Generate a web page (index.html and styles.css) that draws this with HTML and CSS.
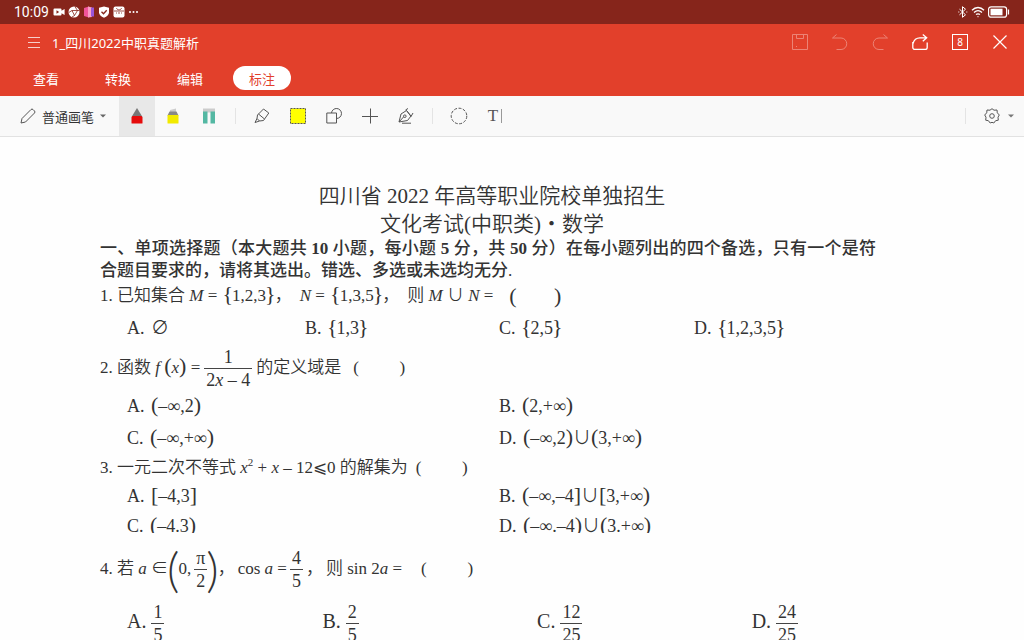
FILE: index.html
```html
<!DOCTYPE html>
<html lang="zh-CN">
<head>
<meta charset="utf-8">
<meta name="viewport" content="width=device-width, initial-scale=1">
<title>1_四川2022中职真题解析</title>
<link rel="stylesheet" href="styles.css">
</head>
<body>
<div class="status">
  <span class="clock">10:09</span>
  <svg width="12" height="12" viewBox="0 0 12 12"><path d="M1.500 2.500h6a1 1 0 0 1 1 1v1.200L11.600 3v6L8.500 7.300v1.200a1 1 0 0 1-1 1h-6a1 1 0 0 1-1-1v-5a1 1 0 0 1 1-1z" fill="#fff"/><path d="M3.500 4.200v3.600L6.200 6z" fill="#86251b"/></svg>
  <svg width="12" height="12" viewBox="0 0 12 12"><circle cx="6" cy="6" r="5.500" fill="#fff"/><path d="M.8 6.500L4 4.500h7M4 4.500l2.500 5L4 11M6.500 9.500L9.500 4.500 7 .8" fill="none" stroke="#86251b" stroke-width=".8"/></svg>
  <svg width="12" height="12" viewBox="0 0 12 12"><path d="M1 2l5-1.500v11L1 10z" fill="#f2559b"/><path d="M5 .6l4 .8v9.500l-4 .6z" fill="#fb9fc6"/><path d="M8 1.500h3v9H8z" fill="#9a55d8"/></svg>
  <svg width="12" height="12" viewBox="0 0 12 12"><path d="M6 .4l5 1.400v4.500c0 2.500-2 4.200-5 5.500C3 10.500 1 8.800 1 6.300V1.800z" fill="#fff"/><path d="M3.500 5.800l2 2 3.200-3.500" fill="none" stroke="#86251b" stroke-width="1.300"/></svg>
  <svg width="12" height="12" viewBox="0 0 12 12"><rect x=".5" y=".5" width="11" height="11" rx="2" fill="#fff"/><path d="M3.500 2c.5 2.500 4.500 2.500 5 0M1 5h10M3 7h1m1 0h2m1 0h1" fill="none" stroke="#86251b" stroke-width=".8"/></svg>
  <svg width="12" height="12" viewBox="0 0 12 12" fill="#fff"><circle cx="2" cy="6" r="1"/><circle cx="5.500" cy="6" r="1"/><circle cx="9" cy="6" r="1"/></svg>
  <span class="spacer"></span>
  <svg width="10" height="12" viewBox="0 0 10 12" fill="none" stroke="#fff"><path d="M1.500 3.200l6 5.600L4.500 11.300V.7l3 2.500-6 5.600M.3 6h1M8.300 6h1"/></svg>
  <svg width="14" height="12" viewBox="0 0 14 12" fill="none" stroke="#fff" stroke-width="1.300"><path d="M1 4.200c3.500-3.600 8.500-3.600 12 0M3 6.500c2.500-2.300 5.500-2.300 8 0M5 8.600c1.300-1 2.700-1 4 0"/><circle cx="7" cy="10.700" r=".6" fill="#fff" stroke="none"/></svg>
  <svg width="22" height="12" viewBox="0 0 22 12"><rect x=".6" y=".8" width="18" height="10.400" rx="2.500" fill="none" stroke="#fff" stroke-width="1.200"/><rect x="2.500" y="2.700" width="12" height="6.600" fill="#fff"/><path d="M20.500 3.500v5" stroke="#fff" stroke-width="1.200"/></svg>
</div>

<header class="header">
  <div class="title-row">
    <button class="menu" aria-label="菜单"><svg width="12" height="12" viewBox="0 0 12 12" stroke="#fff" opacity=".75"><path d="M0 1.500h12M0 6.500h12M0 11.500h12"/></svg></button>
    <h1 class="file">1_四川2022中职真题解析</h1>
    <span class="spacer"></span>
    <button class="act dim" aria-label="保存"><svg width="16" height="16" viewBox="0 0 16 16"><path d="M.5.500h15v15H.5zM4.500.500v4h7v-4M4 12.500h1"/></svg></button>
    <button class="act dim" aria-label="撤销"><svg width="16" height="16" viewBox="0 0 16 16"><path d="M4.500.500l-4 3.500H9a5.700 5.700 0 0 1 0 11.500H4.500"/></svg></button>
    <button class="act dim" aria-label="重做"><svg width="16" height="16" viewBox="0 0 16 16"><path d="M11.500.500l4 3.500H7a5.700 5.700 0 0 0 0 11.500h4.500"/></svg></button>
    <button class="act" aria-label="分享"><svg width="16" height="16" viewBox="0 0 16 16"><path d="M.8 8v5.500a2 2 0 0 0 2 2h10.400a2 2 0 0 0 2-2V8.500M1 9.500C2 5.500 5 3.800 8 3.800h6.500M10.800.500l3.900 3.300-3.900 3.400" stroke-width="1.300"/></svg></button>
    <button class="act"><span class="count">8</span></button>
    <button class="act" aria-label="关闭"><svg width="16" height="16" viewBox="0 0 16 16"><path d="M1.500 1.500l13 13M14.500 1.500l-13 13" stroke-width="1.200"/></svg></button>
  </div>
  <nav class="tabs">
    <button class="tab">查看</button>
    <button class="tab">转换</button>
    <button class="tab">编辑</button>
    <button class="tab active">标注</button>
  </nav>
</header>

<div class="toolbar">
  <button class="pen">
    <svg width="16" height="16" viewBox="0 0 16 16" class="line"><path d="M1 15l1-4.500L11 1.500q1-1 2 0l1.500 1.500q1 1 0 2L5.500 14z"/></svg>
    <span>普通画笔</span>
    <svg width="6" height="4" viewBox="0 0 6 4"><path d="M0 .5h6L3 3.500z" fill="#666"/></svg>
  </button>
  <button class="tool on" aria-label="红色画笔"><svg width="14" height="16" viewBox="0 0 14 16"><path d="M7 0L1.500 9h11z" fill="#777"/><path d="M2.500 8h9l1 1.500V15a.5.500 0 0 1-.5.500H2a.5.500 0 0 1-.5-.5V9.500z" fill="#e50b0b"/></svg></button>
  <button class="tool" aria-label="黄色荧光笔"><svg width="14" height="16" viewBox="0 0 14 16"><path d="M4 2l6-1.500V4H4z" fill="#ccc"/><path d="M3.500 3.500h7l2 4h-11z" fill="#888"/><path d="M1.500 7h11v8a.5.500 0 0 1-.5.500H2a.5.500 0 0 1-.5-.5z" fill="#f2ea00"/></svg></button>
  <button class="tool" aria-label="胶带"><svg width="14" height="16" viewBox="0 0 14 16"><path d="M1 .5h12v4H1z" fill="#ccc"/><path d="M1 3.500h4.500v12H1zM8.500 3.500H13v12H8.500z" fill="#54b8a3"/></svg></button>
  <span class="divider"></span>
  <button class="tool" aria-label="橡皮擦"><svg width="16" height="16" viewBox="0 0 16 16" class="line"><path d="M9.500 1l5.300 4-5.300 7.500-4 .5L3 10.500l.5-3.500zM4.500 6l6 5M3 10.500L1 14.500l4.500-1.500"/></svg></button>
  <button class="tool" aria-label="区域高亮"><svg width="16" height="16" viewBox="0 0 16 16"><rect x=".5" y=".5" width="15" height="15" fill="#ff0" stroke="#555" stroke-dasharray="2 1"/></svg></button>
  <button class="tool" aria-label="形状"><svg width="16" height="16" viewBox="0 0 16 16" class="line"><path d="M.8 5h9.700v10H.8zM5.500 5A5 5 0 1 1 10.500 10.500"/></svg></button>
  <button class="tool" aria-label="添加"><svg width="16" height="16" viewBox="0 0 16 16" class="line"><path d="M0 8.500h16M8.500.500v15"/></svg></button>
  <button class="tool" aria-label="签名"><svg width="16" height="16" viewBox="0 0 16 16" class="line"><path d="M1 14L3 6l5.500-3.500L13 8l-3.500 4.500zM1 14l4.500-5M7.500 2L10 .5M8.500 2.500l4.500 6L15 5M4 15.200h9"/><circle cx="6.800" cy="8.200" r="1.300"/></svg></button>
  <span class="divider"></span>
  <button class="tool" aria-label="圈选"><svg width="18" height="18" viewBox="0 0 18 18" class="line"><circle cx="9" cy="9" r="7.800" stroke-dasharray="3 1.500"/></svg></button>
  <button class="tool letter" aria-label="文字"><span>T</span><span class="cursor"></span></button>
  <span class="spacer"></span>
  <span class="divider"></span>
  <button class="settings" aria-label="设置">
    <svg width="16" height="16" viewBox="0 0 16 16" class="line"><path d="M8 .7l2 1.500 3-.2.300 2.800 2 2.200-1.300 2.200.3 3-2.700.5L9.800 15 8 14.300 6.200 15l-1.800-2.300-2.700-.5.300-3L.7 7l2-2.200L3 2l3 .2z" stroke-linejoin="round"/><circle cx="8" cy="8" r="2.300"/></svg>
    <svg width="6" height="4" viewBox="0 0 6 4"><path d="M0 .5h6L3 3.500z" fill="#777"/></svg>
  </button>
</div>

<main class="doc">
  <h2 class="heading">四川省 2022 年高等职业院校单独招生<br>文化考试(中职类)・数学</h2>
  <p class="intro">一、单项选择题（本大题共 <b>10</b> 小题，每小题 <b>5</b> 分，共 <b>50</b> 分）在每小题列出的四个备选，只有一个是符合题目要求的，请将其选出。错选、多选或未选均无分.</p>

  <p class="ask q1"><span>1. 已知集合 <i>M</i> = <span class="m"><span class="br">{</span>1,2,3<span class="br">}</span></span>，</span><span><i>N</i> = <span class="m"><span class="br">{</span>1,3,5<span class="br">}</span></span>，</span><span>则 <i>M</i> ∪ <i>N</i> =</span><span class="blank"><span class="pa">(</span><span class="pa">)</span></span></p>
  <div class="opts four">
    <span>A. <span class="m">∅</span></span>
    <span>B. <span class="m"><span class="br">{</span>1,3<span class="br">}</span></span></span>
    <span>C. <span class="m"><span class="br">{</span>2,5<span class="br">}</span></span></span>
    <span>D. <span class="m"><span class="br">{</span>1,2,3,5<span class="br">}</span></span></span>
  </div>

  <p class="ask q2"><span>2. 函数 <i>f</i> <span class="pa">(</span><i>x</i><span class="pa">)</span> =</span><span class="frac"><span>1</span><span>2<i>x</i> – 4</span></span><span>的定义域是</span><span class="blank"><span>(</span><span>)</span></span></p>
  <div class="opts two">
    <span>A. <span class="m"><span class="pa">(</span>–∞,2<span class="pa">)</span></span></span>
    <span>B. <span class="m"><span class="pa">(</span>2,+∞<span class="pa">)</span></span></span>
    <span>C. <span class="m"><span class="pa">(</span>–∞,+∞<span class="pa">)</span></span></span>
    <span>D. <span class="m"><span class="pa">(</span>–∞,2<span class="pa">)</span>∪<span class="pa">(</span>3,+∞<span class="pa">)</span></span></span>
  </div>

  <p class="ask q3"><span>3. 一元二次不等式 <i>x</i><sup>2</sup> + <i>x</i> – 12⩽0 的解集为</span><span class="blank"><span>(</span><span>)</span></span></p>
  <div class="opts two cut">
    <span>A. <span class="m"><span class="pa">[</span>–4,3<span class="pa">]</span></span></span>
    <span>B. <span class="m"><span class="pa">(</span>–∞,–4<span class="pa">]</span>∪<span class="pa">[</span>3,+∞<span class="pa">)</span></span></span>
    <span>C. <span class="m"><span class="pa">(</span>–4.3<span class="pa">)</span></span></span>
    <span>D. <span class="m"><span class="pa">(</span>–∞.–4<span class="pa">)</span>∪<span class="pa">(</span>3.+∞<span class="pa">)</span></span></span>
  </div>

  <p class="ask q4"><span>4. 若 <i>a</i> ∈</span><span class="tall">(</span><span>0,</span><span class="frac"><span>π</span><span>2</span></span><span class="tall">)</span><span>，</span><span>cos <i>a</i> =</span><span class="frac"><span>4</span><span>5</span></span><span>，</span><span>则 sin 2<i>a</i> =</span><span class="blank"><span>(</span><span>)</span></span></p>
  <div class="opts fractions">
    <span>A. <span class="frac"><span>1</span><span>5</span></span></span>
    <span>B. <span class="frac"><span>2</span><span>5</span></span></span>
    <span>C. <span class="frac"><span>12</span><span>25</span></span></span>
    <span>D. <span class="frac"><span>24</span><span>25</span></span></span>
  </div>
</main>
</body>
</html>
```
FILE: styles.css
```css
* { box-sizing: border-box; }

body {
  margin: 0;
  height: 100vh;
  overflow: hidden;
  display: flex;
  flex-direction: column;
  background: #fefefe;
  color: #333;
  font-family: "Noto Sans", "Noto Sans CJK SC", sans-serif;
  font-size: 13px;
}

button {
  border: 0;
  padding: 0;
  background: none;
  color: inherit;
  font: inherit;
  display: flex;
  align-items: center;
  justify-content: center;
}

svg { flex: none; }
.spacer { flex: 1; }

/* Status bar */
.status {
  flex: none;
  height: 24px;
  padding: 0 14px;
  display: flex;
  align-items: center;
  gap: 3px;
  background: #86251b;
  color: #fff;
}
.clock {
  margin-right: 1px;
  font-family: Roboto, sans-serif;
  font-size: 14px;
}

/* Red header */
.header {
  flex: none;
  background: #e2402b;
  color: #fff;
}
.title-row {
  height: 36px;
  padding: 0 4px 0 28px;
  display: flex;
  align-items: center;
}
.menu { width: 12px; height: 36px; }
.file {
  margin: 0 0 0 12px;
  font-size: 13px;
  font-weight: 400;
}
.act { width: 40px; height: 36px; }
.act svg { fill: none; stroke: #fff; }
.dim { opacity: .35; }
.count {
  width: 16px;
  height: 16px;
  border: 1px solid #fff;
  font-size: 10px;
  line-height: 14px;
}
.tabs {
  height: 36px;
  padding-left: 17px;
  display: flex;
  align-items: center;
  gap: 14px;
}
.tab {
  width: 58px;
  height: 24px;
  border-radius: 12px;
}
.tab.active { background: #fff; color: #e2402b; }

/* Annotation toolbar */
.toolbar {
  flex: none;
  height: 41px;
  padding: 0 10px 0 20px;
  display: flex;
  align-items: center;
  background: #f9f9f9;
  border-bottom: 1px solid #e2e2e2;
}
.line { fill: none; stroke: #555; }
.pen { height: 40px; gap: 6px; padding-right: 13px; }
.tool { width: 36px; height: 40px; }
.tool.on { background: #e8e8e8; }
.divider {
  width: 1px;
  height: 16px;
  margin: 0 8px;
  background: #e4e4e4;
}
.letter {
  gap: 3px;
  font-family: "Liberation Serif", serif;
  font-size: 17px;
  color: #555;
}
.cursor { width: 1px; height: 14px; background: #999; }
.settings { height: 40px; gap: 8px; margin-left: 10px; }

/* Document page */
.doc {
  flex: 1;
  min-height: 0;
  overflow: hidden;
  padding: 45px 148px 0 100px;
  font-family: "Liberation Serif", "Noto Sans CJK SC", serif;
  font-size: 18px;
  font-weight: 350;
}
.heading {
  margin: 0;
  padding-left: 8px;
  text-align: center;
  font-size: 21px;
  line-height: 28px;
  font-weight: 350;
}
.intro {
  margin: 0;
  font-size: 17px;
  line-height: 22px;
  font-weight: 500;
  text-align: justify;
}
.ask {
  margin: 0;
  display: flex;
  align-items: center;
  white-space: nowrap;
  font-size: 17px;
  line-height: 26px;
}
.q1 { height: 28px; gap: 8px; }
.q2 { height: 44px; gap: 4px; }
.q3 { height: 28px; }
.q4 { height: 68px; padding-top: 4px; gap: 3px; }
.blank {
  display: flex;
  justify-content: space-between;
  width: 52px;
  margin-left: 8px;
}
.m { margin-left: 2px; }
.br, .pa { font-size: 22px; line-height: 1; }
.br { margin: 0 -1px; }
.tall {
  margin: 0 -4px;
  font-family: Lato, sans-serif;
  font-weight: 300;
  font-size: 48px;
  line-height: 1;
}
sup { font-size: 11px; line-height: 1; }

.frac {
  display: inline-flex;
  flex-direction: column;
  align-items: center;
  vertical-align: middle;
  line-height: 22px;
  font-size: 18px;
}
.frac > span { padding: 0 2px; }
.frac > span + span { border-top: 1px solid #444; }

.opts {
  display: grid;
  padding-left: 27px;
  white-space: nowrap;
}
.four { grid-template-columns: 178fr 194fr 195fr 182fr; line-height: 36px; }
.two { grid-template-columns: 372fr 377fr; line-height: 32px; }
.cut {
  grid-template-rows: 28px 24px;
  height: 51px;
  line-height: 28px;
  overflow: hidden;
}
.cut > :nth-child(n+3) { line-height: 32px; }
.q4 .blank { margin-left: 16px; }
.fractions {
  grid-template-columns: 195fr 214fr 214fr 124fr;
  font-size: 20px;
}
```
